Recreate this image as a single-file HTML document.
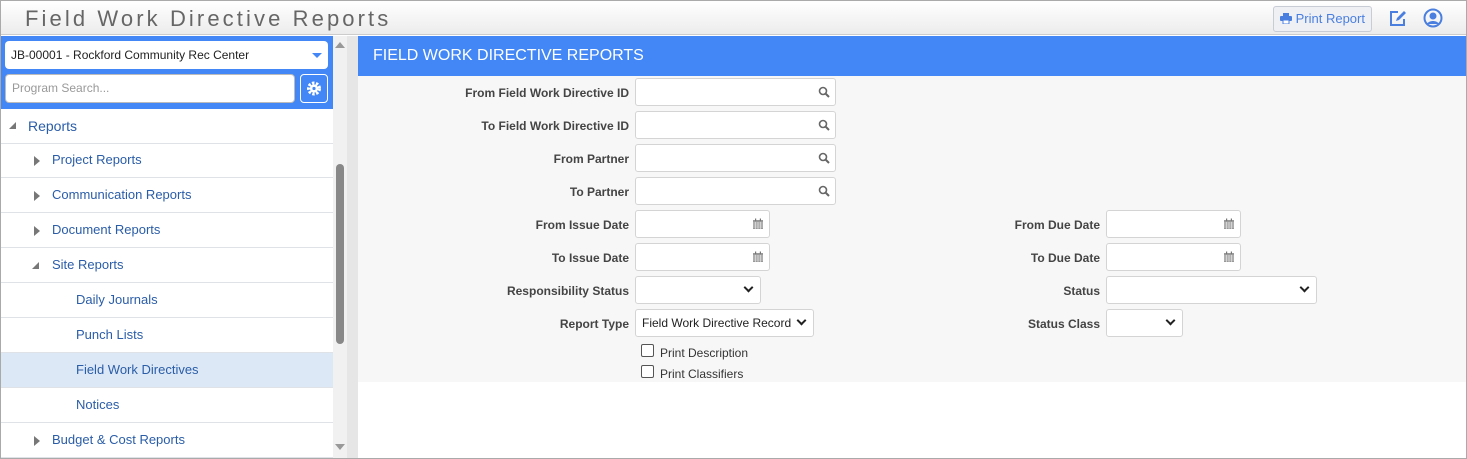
<!DOCTYPE html>
<html><head><style>
*{box-sizing:border-box;margin:0;padding:0}
body{width:1467px;height:459px;overflow:hidden;font-family:"Liberation Sans",Arial,sans-serif;background:#fff;position:relative}
.frame{position:absolute;left:0;top:0;width:1467px;height:459px;border:1px solid #aaa}
.hdr{position:absolute;left:1px;top:1px;width:1465px;height:34px;background:linear-gradient(#fff,#ececec);border-bottom:1px solid #ccc}
.title{position:absolute;left:24px;top:5px;font-size:22px;color:#666;letter-spacing:3.1px;font-weight:normal;white-space:nowrap}
.pbtn{position:absolute;left:1272px;top:5px;width:99px;height:26px;border:1px solid #c8ccd4;border-radius:3px;background:#eef0f4;color:#4a7fe0;font-size:13px;line-height:24px;padding-left:6px;white-space:nowrap}
.side{position:absolute;left:1px;top:36px;width:332px;height:422px;background:#fff}
.sblue{position:absolute;left:0;top:0;width:332px;height:73px;background:#4287f5}
.sel{position:absolute;left:4px;top:5px;width:323px;height:28px;background:#fff;border-radius:4px;font-size:12px;line-height:28px;padding-left:6px;color:#222}
.srch{position:absolute;left:4px;top:38px;width:290px;height:29px;background:#fff;border-radius:4px;border:1px solid #bbb;font-size:12px;line-height:27px;padding-left:6px;color:#999}
.gear{position:absolute;left:299px;top:38px;width:28px;height:29px;border:1px solid #fff;border-radius:4px;background:#4287f5}
.row{position:absolute;left:0;width:332px;height:35px;border-bottom:1px solid #dfe3e8;font-size:13px;color:#2a5da8;line-height:34px;white-space:nowrap}
.tri{position:absolute;top:13px;width:0;height:0;border-top:5px solid transparent;border-bottom:5px solid transparent;border-left:6px solid #777}
.sb{position:absolute;left:333px;top:36px;width:14px;height:422px;background:#f1f1f1}
.gap{position:absolute;left:347px;top:36px;width:11px;height:422px;background:#e6e6e6}
.main{position:absolute;left:358px;top:36px;width:1108px;height:422px;background:#fff}
.mbar{position:absolute;left:0;top:0;width:1108px;height:40px;background:#4287f5;color:#fff;font-size:16px;line-height:40px;padding-left:15px}
.form{position:absolute;left:0;top:40px;width:1108px;height:306px;background:#f7f7f7}
.lbl{position:absolute;font-size:12px;font-weight:bold;color:#444;text-align:right;width:300px;white-space:nowrap}
.inp{position:absolute;height:28px;background:#fff;border:1px solid #d4d4d4;border-radius:3px;white-space:nowrap}
.ic{position:absolute;right:5px;top:7px}
.chev{position:absolute;right:8px;top:7px;width:7px;height:7px;border-right:2px solid #222;border-bottom:2px solid #222;transform:rotate(45deg)}
.cb{position:absolute;width:13px;height:13px;border:1px solid #555;border-radius:2px;background:#fff}
.ct{position:absolute;font-size:12px;color:#333;white-space:nowrap}
</style></head><body>
<div class="hdr"><div class="title">Field Work Directive Reports</div>
<div class="pbtn"><svg width="12" height="11" viewBox="0 0 12 11" style="vertical-align:-1px"><rect x="3" y="0" width="6" height="3" fill="#4a7fe0"/><rect x="0" y="3" width="12" height="5" rx="1" fill="#4a7fe0"/><rect x="3" y="7" width="6" height="4" fill="#fff" stroke="#4a7fe0"/></svg> Print Report</div>
<svg style="position:absolute;left:1388px;top:9px" width="18" height="17" viewBox="0 0 18 17"><path d="M9 2H2v13h13V9" fill="none" stroke="#4a7fe0" stroke-width="2"/><path d="M7 11l1-3 7-7 2 2-7 7z" fill="#4a7fe0"/></svg>
<svg style="position:absolute;left:1422px;top:7px" width="20" height="20" viewBox="0 0 20 20"><circle cx="10" cy="10" r="8.5" fill="none" stroke="#4a7fe0" stroke-width="2"/><circle cx="10" cy="8" r="3.5" fill="#4a7fe0"/><path d="M4 16c2-4 10-4 12 0z" fill="#4a7fe0"/></svg>
</div>
<div class="side">
<div class="sblue">
<div class="sel">JB-00001 - Rockford Community Rec Center<span style="position:absolute;right:6px;top:12px;border-left:5px solid transparent;border-right:5px solid transparent;border-top:5px solid #4287f5"></span></div>
<div class="srch">Program Search...</div>
<div class="gear"><svg width="26" height="27" viewBox="0 0 26 27"><circle cx="13" cy="13.5" r="5" fill="none" stroke="#fff" stroke-width="4" stroke-dasharray="2.2 1.4"/><circle cx="13" cy="13.5" r="4" fill="#fff"/><circle cx="13" cy="13.5" r="1.6" fill="#4287f5"/></svg></div>
</div>
<div class="row" style="top:73px;font-size:14px"><span style="position:absolute;left:8px;top:13px;border-left:7px solid transparent;border-bottom:7px solid #777"></span><span style="position:absolute;left:27px">Reports</span></div>
<div class="row" style="top:107px"><span class="tri" style="left:33px"></span><span style="position:absolute;left:51px">Project Reports</span></div>
<div class="row" style="top:142px"><span class="tri" style="left:33px"></span><span style="position:absolute;left:51px">Communication Reports</span></div>
<div class="row" style="top:177px"><span class="tri" style="left:33px"></span><span style="position:absolute;left:51px">Document Reports</span></div>
<div class="row" style="top:212px"><span style="position:absolute;left:31px;top:14px;border-left:7px solid transparent;border-bottom:7px solid #777"></span><span style="position:absolute;left:51px">Site Reports</span></div>
<div class="row" style="top:247px"><span style="position:absolute;left:75px">Daily Journals</span></div>
<div class="row" style="top:282px"><span style="position:absolute;left:75px">Punch Lists</span></div>
<div class="row" style="top:317px;background:#dce8f5"><span style="position:absolute;left:75px">Field Work Directives</span></div>
<div class="row" style="top:352px"><span style="position:absolute;left:75px">Notices</span></div>
<div class="row" style="top:387px"><span class="tri" style="left:33px"></span><span style="position:absolute;left:51px">Budget &amp; Cost Reports</span></div>
</div>
<div class="sb"><span style="position:absolute;left:2px;top:6px;border-left:5px solid transparent;border-right:5px solid transparent;border-bottom:6px solid #999"></span><div style="position:absolute;left:3px;top:128px;width:8px;height:180px;background:#888;border-radius:4px"></div><span style="position:absolute;left:2px;top:408px;border-left:5px solid transparent;border-right:5px solid transparent;border-top:6px solid #999"></span></div>
<div class="gap"></div>
<div class="main">
<div class="mbar">FIELD WORK DIRECTIVE REPORTS</div>
<div class="form"></div>
</div>
<svg width="0" height="0" style="position:absolute"><defs>
<symbol id="mg" viewBox="0 0 12 12"><circle cx="5" cy="5" r="3.5" fill="none" stroke="#666" stroke-width="1.6"/><path d="M7.5 7.5L11 11" stroke="#666" stroke-width="2"/></symbol>
<symbol id="cal" viewBox="0 0 12 12"><rect x="1" y="2" width="10" height="9" fill="#999"/><path d="M1 5h10M1 7h10M1 9h10M3.5 4v7M6 4v7M8.5 4v7" stroke="#eee" stroke-width=".6"/><rect x="3" y="0.5" width="1.2" height="2.5" fill="#777"/><rect x="7.8" y="0.5" width="1.2" height="2.5" fill="#777"/></symbol>
</defs></svg>
<div style="position:absolute;left:0;top:0">
<div class="lbl" style="left:329px;top:86px">From Field Work Directive ID</div>
<div class="inp" style="left:635px;top:78px;width:201px"><svg class="ic" width="12" height="12"><use href="#mg"/></svg></div>
<div class="lbl" style="left:329px;top:119px">To Field Work Directive ID</div>
<div class="inp" style="left:635px;top:111px;width:201px"><svg class="ic" width="12" height="12"><use href="#mg"/></svg></div>
<div class="lbl" style="left:329px;top:152px">From Partner</div>
<div class="inp" style="left:635px;top:144px;width:201px"><svg class="ic" width="12" height="12"><use href="#mg"/></svg></div>
<div class="lbl" style="left:329px;top:185px">To Partner</div>
<div class="inp" style="left:635px;top:177px;width:201px"><svg class="ic" width="12" height="12"><use href="#mg"/></svg></div>
<div class="lbl" style="left:329px;top:218px">From Issue Date</div>
<div class="inp" style="left:635px;top:210px;width:135px"><svg class="ic" width="12" height="12"><use href="#cal"/></svg></div>
<div class="lbl" style="left:329px;top:251px">To Issue Date</div>
<div class="inp" style="left:635px;top:243px;width:135px"><svg class="ic" width="12" height="12"><use href="#cal"/></svg></div>
<div class="lbl" style="left:329px;top:284px">Responsibility Status</div>
<div class="inp" style="left:635px;top:276px;width:126px"><span class="chev"></span></div>
<div class="lbl" style="left:329px;top:317px">Report Type</div>
<div class="inp" style="left:635px;top:309px;width:179px;font-size:12px;line-height:26px;padding-left:6px;color:#222">Field Work Directive Record<span class="chev"></span></div>
<div class="cb" style="left:641px;top:344px"></div><div class="ct" style="left:660px;top:346px">Print Description</div>
<div class="cb" style="left:641px;top:365px"></div><div class="ct" style="left:660px;top:367px">Print Classifiers</div>
<div class="lbl" style="left:800px;top:218px">From Due Date</div>
<div class="inp" style="left:1106px;top:210px;width:135px"><svg class="ic" width="12" height="12"><use href="#cal"/></svg></div>
<div class="lbl" style="left:800px;top:251px">To Due Date</div>
<div class="inp" style="left:1106px;top:243px;width:135px"><svg class="ic" width="12" height="12"><use href="#cal"/></svg></div>
<div class="lbl" style="left:800px;top:284px">Status</div>
<div class="inp" style="left:1106px;top:276px;width:211px"><span class="chev"></span></div>
<div class="lbl" style="left:800px;top:317px">Status Class</div>
<div class="inp" style="left:1106px;top:309px;width:77px"><span class="chev"></span></div>
</div>
<div class="frame"></div>
</body></html>
